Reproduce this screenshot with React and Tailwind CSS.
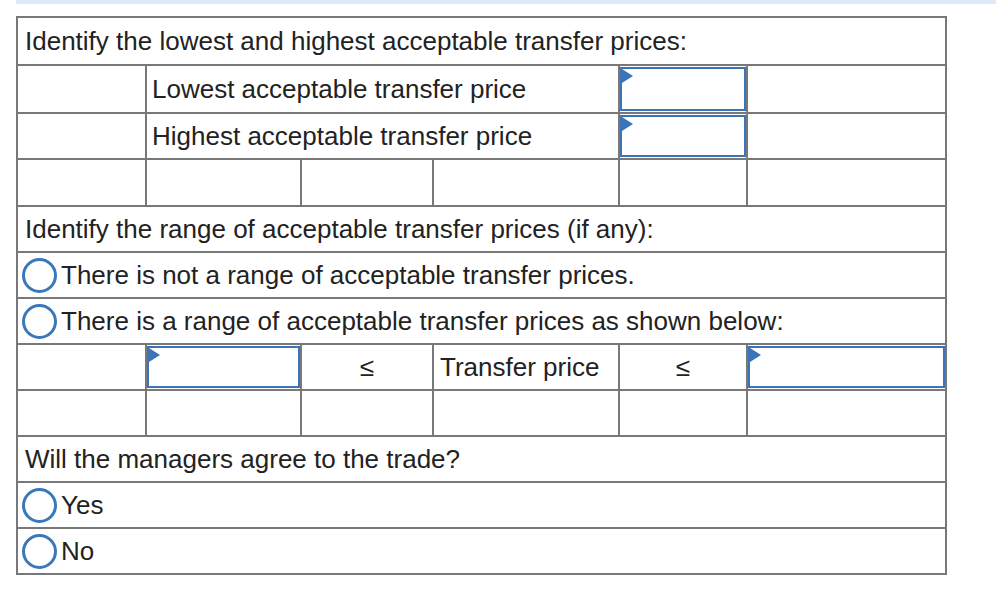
const COLS = "grid-cols-[129px_155px_132px_186px_128px_199px]";

function Cell({ span = 1, h = "h-[46px]", className = "", children }) {
  const spans = {
    1: "col-span-1",
    3: "col-span-3",
    6: "col-span-6",
  };
  return (
    <div className={`${spans[span]} ${h} border-r-2 border-b-2 border-[#787878] flex items-center ${className}`}>
      {children}
    </div>
  );
}

function AnswerBox() {
  return (
    <div className="relative w-full h-full py-px">
      <div className="relative w-full h-full border-2 border-[#3b74b7] bg-white">
        <svg className="absolute left-0 top-0" width="11" height="14" viewBox="0 0 11 14">
          <polygon points="0,0 11,7 0,14" fill="#3b74b7" />
        </svg>
      </div>
    </div>
  );
}

function Radio({ label }) {
  return (
    <div className="flex items-center pl-[4px]">
      <span className="w-[35px] h-[35px] rounded-full border-[3.5px] border-[#3b78b9] shrink-0" />
      <span className="ml-[4px]">{label}</span>
    </div>
  );
}

export default function App() {
  return (
    <div
      className="w-[996px] h-[594px] bg-white text-[#222] text-[26px] leading-none"
      style={{ fontFamily: '"Liberation Sans", Arial, sans-serif' }}
    >
      <div className="ml-[16px] h-[4px] bg-[#dde9f6]" />

      <div className={`ml-[16px] mt-[12px] w-[931px] grid ${COLS} border-t-2 border-l-2 border-[#787878]`}>
        {/* first block */}
        <Cell span={6} h="h-[48px]" className="pl-[7px]">
          Identify the lowest and highest acceptable transfer prices:
        </Cell>

        <Cell h="h-[48px]" />
        <Cell span={3} h="h-[48px]" className="pl-[5px]">Lowest acceptable transfer price</Cell>
        <Cell h="h-[48px]"><AnswerBox /></Cell>
        <Cell h="h-[48px]" />

        <Cell />
        <Cell span={3} className="pl-[5px]">Highest acceptable transfer price</Cell>
        <Cell><AnswerBox /></Cell>
        <Cell />

        <Cell h="h-[47px]" />
        <Cell h="h-[47px]" />
        <Cell h="h-[47px]" />
        <Cell h="h-[47px]" />
        <Cell h="h-[47px]" />
        <Cell h="h-[47px]" />

        {/* range block */}
        <Cell span={6} className="pl-[7px]">
          Identify the range of acceptable transfer prices (if any):
        </Cell>
        <Cell span={6}>
          <Radio label="There is not a range of acceptable transfer prices." />
        </Cell>
        <Cell span={6}>
          <Radio label="There is a range of acceptable transfer prices as shown below:" />
        </Cell>

        <Cell />
        <Cell><AnswerBox /></Cell>
        <Cell className="justify-center">≤</Cell>
        <Cell className="pl-[6px]">Transfer price</Cell>
        <Cell className="justify-center">≤</Cell>
        <Cell><AnswerBox /></Cell>

        <Cell />
        <Cell />
        <Cell />
        <Cell />
        <Cell />
        <Cell />

        {/* agree block */}
        <Cell span={6} className="pl-[7px]">
          Will the managers agree to the trade?
        </Cell>
        <Cell span={6}>
          <Radio label="Yes" />
        </Cell>
        <Cell span={6}>
          <Radio label="No" />
        </Cell>
      </div>
    </div>
  );
}
